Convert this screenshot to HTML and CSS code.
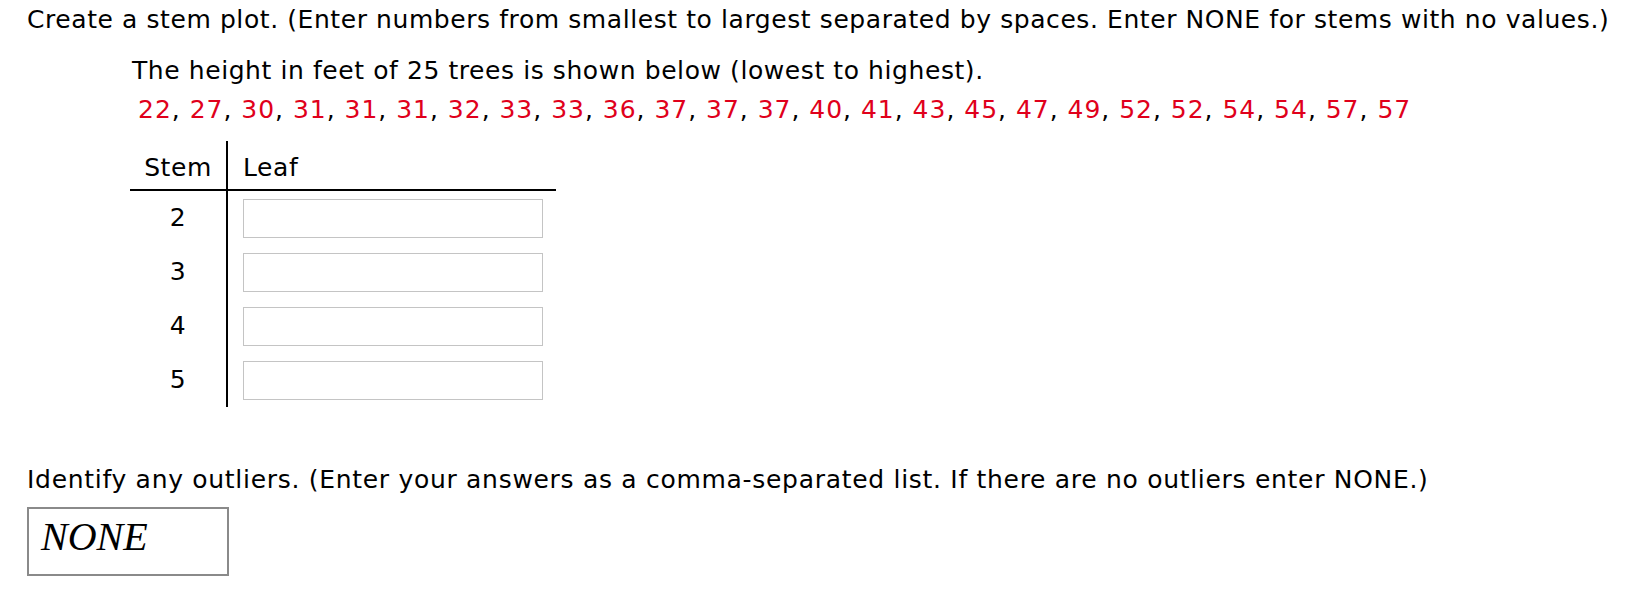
FILE: index.html
```html
<!DOCTYPE html>
<html>
<head>
<meta charset="utf-8">
<link rel="stylesheet" href="styles.css">
</head>
<body>
<div class="page">
  <p class="prompt">Create a stem plot. (Enter numbers from smallest to largest separated by spaces. Enter NONE for stems with no values.)</p>
  <div class="indent">
    <p class="desc">The height in feet of 25 trees is shown below (lowest to highest).</p>
    <p class="data"><span class="r">22</span>, <span class="r">27</span>, <span class="r">30</span>, <span class="r">31</span>, <span class="r">31</span>, <span class="r">31</span>, <span class="r">32</span>, <span class="r">33</span>, <span class="r">33</span>, <span class="r">36</span>, <span class="r">37</span>, <span class="r">37</span>, <span class="r">37</span>, <span class="r">40</span>, <span class="r">41</span>, <span class="r">43</span>, <span class="r">45</span>, <span class="r">47</span>, <span class="r">49</span>, <span class="r">52</span>, <span class="r">52</span>, <span class="r">54</span>, <span class="r">54</span>, <span class="r">57</span>, <span class="r">57</span></p>
    <div class="plot">
      <div class="hstem">Stem</div>
      <div class="hleaf">Leaf</div>
      <div class="stem">2</div><div class="leaf"><input type="text" class="box"></div>
      <div class="stem">3</div><div class="leaf"><input type="text" class="box"></div>
      <div class="stem">4</div><div class="leaf"><input type="text" class="box"></div>
      <div class="stem">5</div><div class="leaf"><input type="text" class="box"></div>
    </div>
  </div>
  <p class="prompt q2">Identify any outliers. (Enter your answers as a comma-separated list. If there are no outliers enter NONE.)</p>
  <div class="answer">NONE</div>
</div>
</body>
</html>
```
FILE: styles.css
```css
html, body {
  margin: 0;
  padding: 0;
  background: #fff;
}
.page {
  font-family: "DejaVu Sans", Verdana, sans-serif;
  font-size: 25px;
  letter-spacing: 0.58px;
  color: #000;
  padding: 5px 0 0 27px;
}
p { margin: 0; }
.prompt {
  line-height: 30px;
  white-space: nowrap;
}
.indent {
  margin-left: 105px;
  margin-top: 21px;
}
.desc { line-height: 30px; }
.data {
  line-height: 30px;
  margin-top: 9px;
  padding-left: 6px;
  letter-spacing: 0.98px;
  white-space: nowrap;
}
.r { color: #e0001b; }
.plot {
  display: grid;
  grid-template-columns: 98px 328px;
  margin-top: 16px;
  margin-left: -2px;
  width: 426px;
  letter-spacing: 0.58px;
}
.hstem, .hleaf, .stem, .leaf { box-sizing: border-box; }
.hstem, .stem {
  border-right: 2px solid #000;
  text-align: center;
}
.hstem {
  border-bottom: 2px solid #000;
  height: 50px;
  padding-top: 5px;
  line-height: 43px;
}
.hleaf {
  border-bottom: 2px solid #000;
  height: 50px;
  padding-top: 5px;
  line-height: 43px;
  padding-left: 15px;
}
.stem {
  height: 54px;
  line-height: 54px;
}
.leaf {
  padding-left: 15px;
  padding-top: 8px;
  height: 54px;
}
.box {
  display: block;
  width: 300px;
  height: 39px;
  box-sizing: border-box;
  border: 1px solid #c4c4c4;
  border-radius: 0;
  padding: 0;
  margin: 0;
  background: #fff;
}
.q2 {
  margin-top: 58px;
  letter-spacing: 0.7px;
}
.answer {
  margin-top: 12px;
  margin-left: 0;
  width: 202px;
  height: 69px;
  box-sizing: border-box;
  border: 2px solid #8a8a8a;
  font-family: "Liberation Serif", "Times New Roman", serif;
  font-style: italic;
  letter-spacing: 0;
  font-size: 40px;
  padding-top: 5px;
  line-height: 46px;
  padding-left: 12px;
}
```
